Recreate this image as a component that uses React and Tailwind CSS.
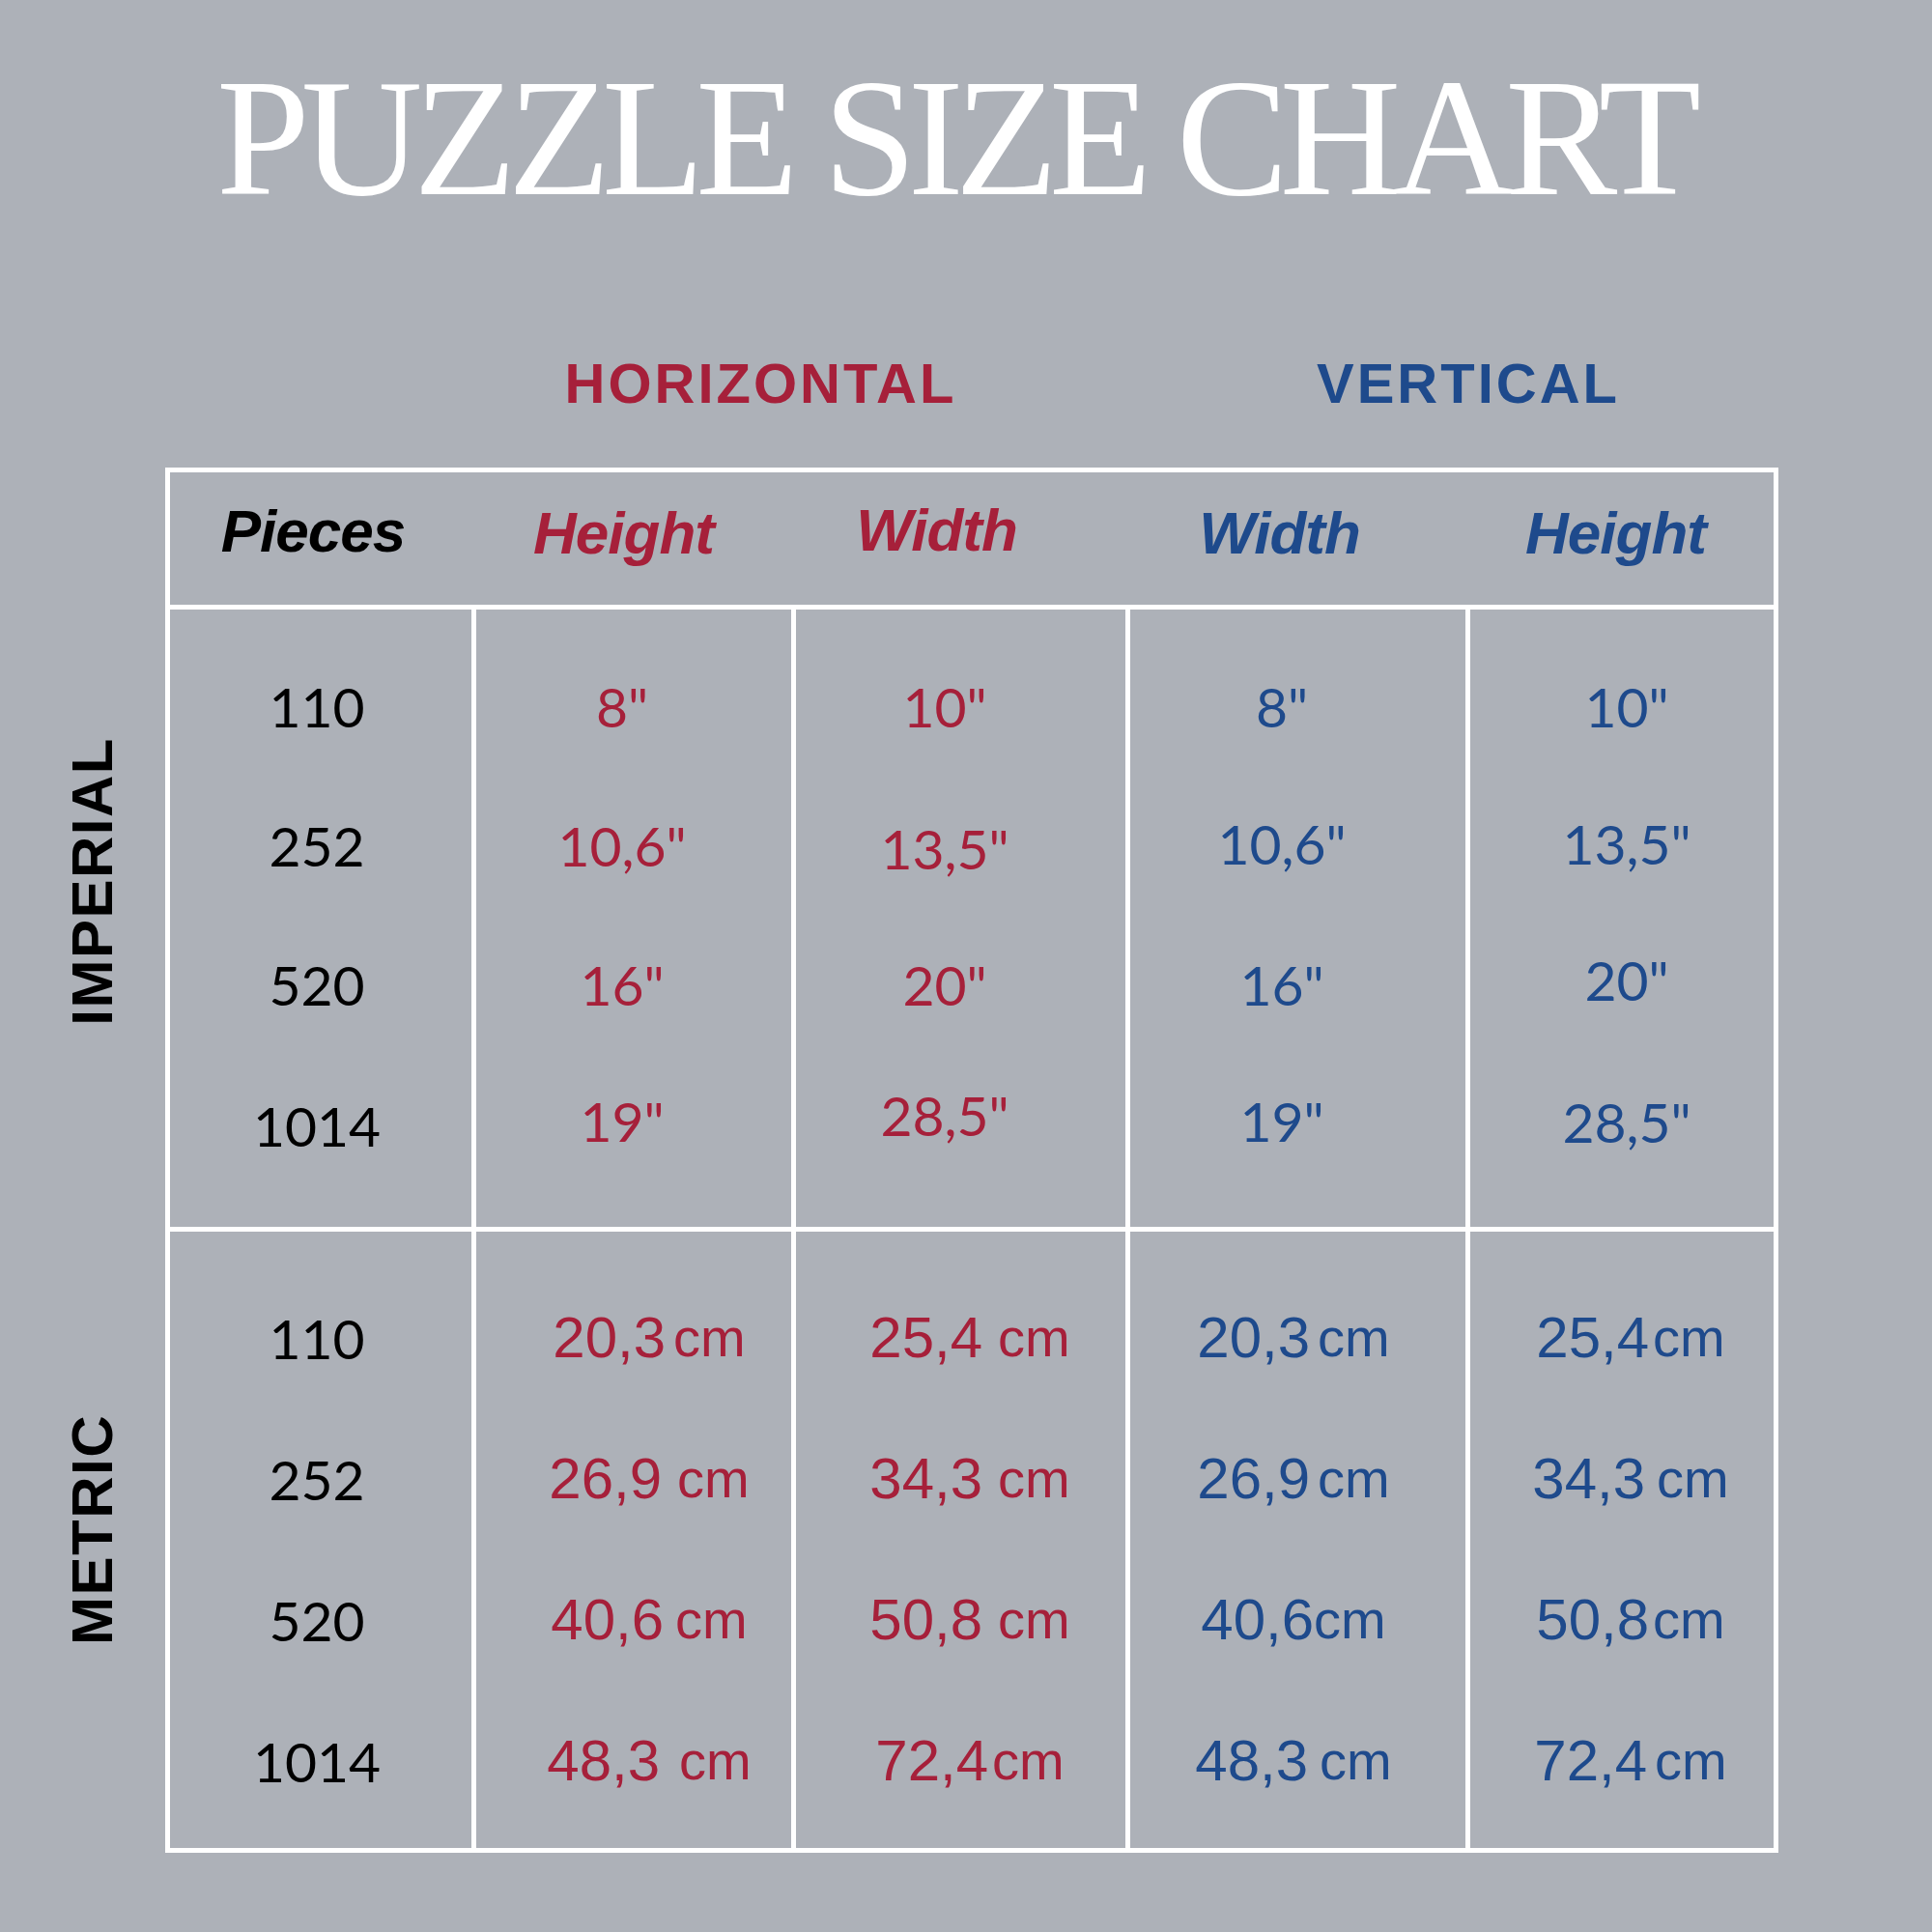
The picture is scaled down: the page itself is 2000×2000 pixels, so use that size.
const RED = "text-[#a6203a]";
const BLUE = "text-[#1e4a8c]";

const headers = [
  { label: "Pieces", color: "text-black", pad: "pr-[16px] pb-[16px]" },
  { label: "Height", color: RED, pad: "pr-[16px] pb-[12px]" },
  { label: "Width", color: RED, pad: "pr-[45px] pb-[18px]" },
  { label: "Width", color: BLUE, pad: "pr-[33px] pb-[12px]" },
  { label: "Height", color: BLUE, pad: "pr-[8px] pb-[12px]" },
];

// each cell: [text, extra nudge class]
const imperial = [
  { color: "text-black", pad: "pr-[8px]", cells: [["110", ""], ["252", ""], ["520", ""], ["1014", "pt-[4px]"]] },
  { color: RED, pad: "pr-[24px]", cells: [['8"', ""], ['10,6"', ""], ['16"', ""], ['19"', "pb-[6px]"]] },
  { color: RED, pad: "pr-[33px]", cells: [['10"', ""], ['13,5"', "pt-[6px]"], ['20"', ""], ['28,5"', "pb-[18px]"]] },
  { color: BLUE, pad: "pr-[33px]", cells: [['8"', ""], ['10,6"', "pb-[4px]"], ['16"', ""], ['19"', "pb-[6px]"]] },
  { color: BLUE, pad: "pl-[10px]", cells: [['10"', ""], ['13,5"', "pb-[4px]"], ['20"', "pb-[10px]"], ['28,5"', "pb-[4px]"]] },
];

const metric = [
  { color: RED, pad: "pl-[32px]", cells: [["20,3", "ml-2"], ["26,9", "ml-4"], ["40,6", "ml-3"], ["48,3", "ml-5"]] },
  { color: RED, pad: "pl-[19px]", cells: [["25,4", "ml-4"], ["34,3", "ml-4"], ["50,8", "ml-4"], ["72,4", "ml-1"]] },
  { color: BLUE, pad: "pr-[9px]", cells: [["20,3", "ml-2"], ["26,9", "ml-2"], ["40,6", "ml-0"], ["48,3", "ml-3"]] },
  { color: BLUE, pad: "pl-[18px]", cells: [["25,4", "ml-1"], ["34,3", "ml-3"], ["50,8", "ml-1"], ["72,4", "ml-2"]] },
];

const pieces = ["110", "252", "520", "1014"];

const cols = "grid grid-cols-[312px_331px_346px_352px_319px]";
const num = "font-['Lato','Liberation_Sans',sans-serif] text-[57px] leading-none";
const side = "font-['Liberation_Sans',sans-serif] font-bold text-[60px] leading-none tracking-[1.5px] text-black [writing-mode:vertical-rl] rotate-180";

const App = () => {
  return (
    <div className="w-[2000px] h-[2000px] bg-[#adb1b8] flex flex-col">
      <h1 className="pt-[56px] pr-[24px] text-center text-white text-[174px] leading-none tracking-[-9px] font-['Liberation_Serif',serif]">
        PUZZLE SIZE CHART
      </h1>

      <div className="mt-[138px] pl-[490px] flex font-['Liberation_Sans',sans-serif] font-bold text-[58px] leading-none tracking-[3px]">
        <div className={`w-[677px] text-center pr-[82px] ${RED}`}>HORIZONTAL</div>
        <div className={`w-[671px] text-center pl-[35px] ${BLUE}`}>VERTICAL</div>
      </div>

      <div className="mt-[58px] flex">
        <div className="w-[171px] flex flex-col">
          <div className="h-[147px]" />
          <div className="h-[644px] flex items-center justify-center pl-[21px] pb-[82px]">
            <span className={side}>IMPERIAL</span>
          </div>
          <div className="h-[643px] flex items-center justify-center pl-[21px] pb-[27px]">
            <span className={side}>METRIC</span>
          </div>
        </div>

        <div className="w-[1670px] border-[5px] border-white">
          <div className={`${cols} h-[142px] border-b-[5px] border-white`}>
            {headers.map((h, i) => (
              <div
                key={i}
                className={`flex items-center justify-center ${h.pad} ${h.color} font-['Liberation_Sans',sans-serif] font-bold italic text-[62px] tracking-[-1px]`}
              >
                {h.label}
              </div>
            ))}
          </div>

          <div className={`${cols} h-[644px] border-b-[5px] border-white`}>
            {imperial.map((col, i) => (
              <div key={i} className={`flex flex-col pt-[28px] ${i > 0 ? "border-l-[5px] border-white" : ""}`}>
                {col.cells.map(([c, nudge], j) => (
                  <div key={j} className={`h-[144px] flex items-center justify-center ${col.pad} ${nudge} ${col.color} ${num}`}>
                    {c}
                  </div>
                ))}
              </div>
            ))}
          </div>

          <div className={`${cols} h-[638px]`}>
            <div className="flex flex-col pt-[37px]">
              {pieces.map((p) => (
                <div key={p} className={`h-[146px] flex items-center justify-center pr-[8px] text-black ${num}`}>
                  {p}
                </div>
              ))}
            </div>
            {metric.map((col, i) => (
              <div key={i} className="flex flex-col pt-[37px] border-l-[5px] border-white">
                {col.cells.map(([v, gap], j) => (
                  <div
                    key={j}
                    className={`h-[146px] flex items-center justify-center ${col.pad} ${col.color} font-['Liberation_Sans',sans-serif] leading-none`}
                  >
                    <span className="text-[60px]">{v}</span>
                    <span className={`text-[56px] ${gap}`}>cm</span>
                  </div>
                ))}
              </div>
            ))}
          </div>
        </div>
      </div>
    </div>
  );
};

export default App;
